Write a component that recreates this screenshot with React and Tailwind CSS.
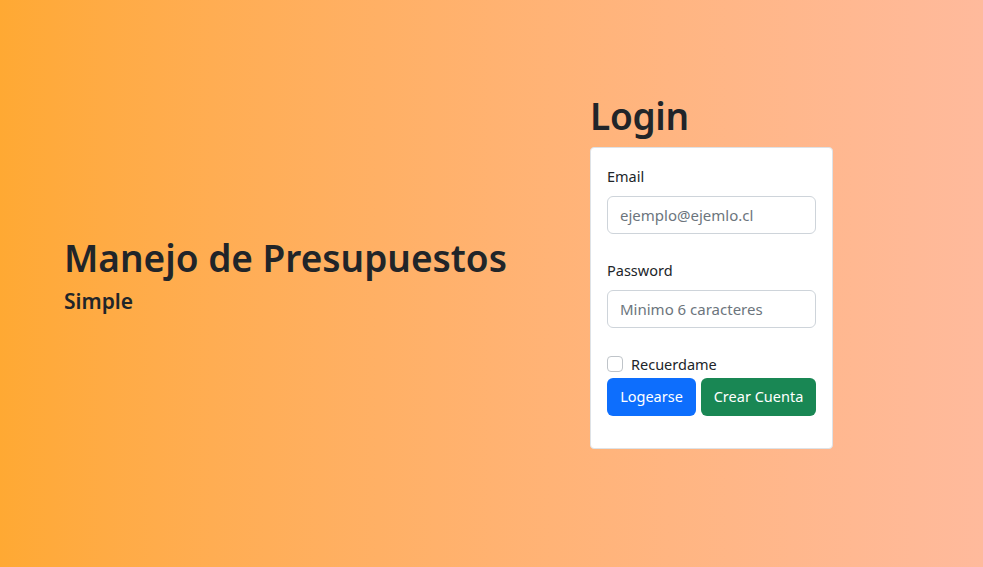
import React from "react";

const App = () => {
  return (
    <div
      className="min-h-screen w-full bg-gradient-to-r from-[#ffa933] to-[#ffba9c] text-[#212529] flex items-center"
      style={{ fontFamily: '"Noto Sans", "Open Sans", sans-serif' }}
    >
      <div className="flex w-full items-center pl-[64px]">
        <div className="w-[526px] pb-[18px]">
          <h1 className="text-[37px] leading-[46px] font-semibold mb-[6px] whitespace-nowrap">Manejo de Presupuestos</h1>
          <h4 className="text-[21px] leading-[28px] font-semibold">Simple</h4>
        </div>
        <div className="w-[243px] pb-[26px]">
          <h1 className="text-[37px] leading-[48px] font-semibold tracking-[-0.3px] mb-[7px]">Login</h1>
          <form className="bg-white border border-[#dee2e6] rounded-[4px] px-[16px] pt-[16px] pb-[16px]">
            <div className="mb-[24px]">
              <label className="block text-[14.5px] leading-[24px] mb-[8px]">Email</label>
              <input
                type="email"
                placeholder="ejemplo@ejemlo.cl"
                className="w-full h-[38px] px-[12px] text-[15px] border border-[#ced4da] rounded-[6px] placeholder:text-[#6c757d] outline-none"
              />
            </div>
            <div className="mb-[24px]">
              <label className="block text-[14.5px] leading-[24px] mb-[8px]">Password</label>
              <input
                type="password"
                placeholder="Minimo 6 caracteres"
                className="w-full h-[38px] px-[12px] text-[15px] border border-[#ced4da] rounded-[6px] placeholder:text-[#6c757d] outline-none"
              />
            </div>
            <label className="flex items-center gap-[8px] text-[14.5px] leading-[24px] mb-[2px]">
              <span className="w-[16px] h-[16px] border border-[#bfc4c9] rounded-[4px] bg-white"></span>
              Recuerdame
            </label>
            <div className="flex gap-[5px] mb-[16px]">
              <button type="button" className="h-[38px] w-[89px] rounded-[6px] bg-[#0d6efd] text-white text-[14.5px] whitespace-nowrap">
                Logearse
              </button>
              <button type="button" className="h-[38px] flex-1 rounded-[6px] bg-[#198754] text-white text-[14.5px] whitespace-nowrap">
                Crear Cuenta
              </button>
            </div>
          </form>
        </div>
      </div>
    </div>
  );
};

export default App;
